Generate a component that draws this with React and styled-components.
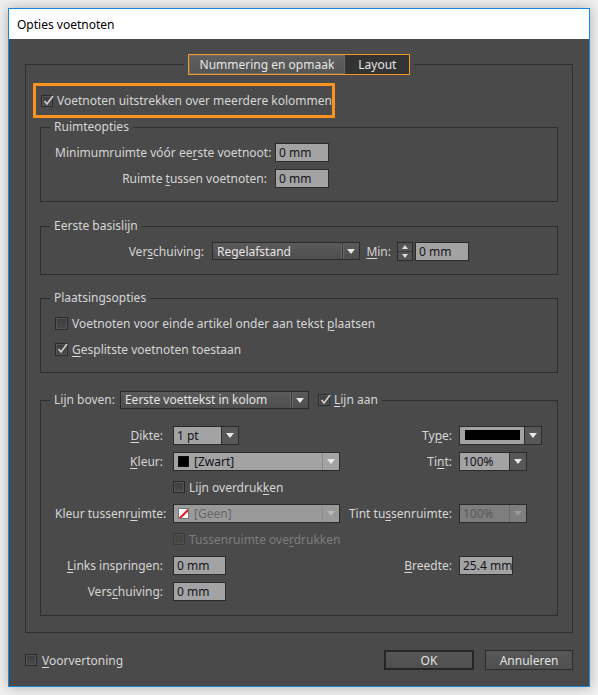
import React from "react";
import styled, { createGlobalStyle, css } from "styled-components";

const GlobalStyle = createGlobalStyle`
  html, body {
    margin: 0;
    padding: 0;
    background: #f0f0f0;
  }
  body {
    font-family: "Noto Sans", "Open Sans", sans-serif;
    font-size: 12px;
  }
  * { box-sizing: border-box; }
`;

const Page = styled.div`
  height: 695px;
  padding: 8px 0 0 8px;
`;

const Window = styled.div`
  width: 582px;
  height: 679px;
  border: 1px solid #1a86d9;
  box-shadow: 0 0 12px rgba(0, 0, 0, 0.28);
  display: flex;
  flex-direction: column;
`;

const TitleBar = styled.div`
  height: 30px;
  background: #ffffff;
  color: #000;
  display: flex;
  align-items: center;
  padding-left: 8px;
  font-size: 12px;
`;

const Body = styled.div`
  flex: 1;
  background: #4a4a4a;
  color: #d6d6d6;
  padding: 15px 16px 16px;
  display: flex;
  flex-direction: column;
`;

const Frame = styled.fieldset`
  margin: 0;
  min-width: 0;
  border: 1px solid #2e2e2e;
  padding: 0 14px 16px;
`;

const TabLegend = styled.legend`
  margin: 0 auto;
  padding: 0 4px;
`;

const TabBar = styled.div`
  display: flex;
  border: 1px solid #f39a1e;
  height: 21px;
`;

const Tab = styled.div`
  height: 19px;
  line-height: 18px;
  padding: 0 ${p => (p.$wide ? 10 : 12)}px;
  color: #e6e6e6;
  font-size: 12px;
  ${p =>
    p.$light
      ? css`
          background: linear-gradient(#5f5f5f, #555);
          border: 1px solid #6a6a6a;
        `
      : css`
          background: #333;
          border: 1px solid #333;
        `}
`;

const Highlight = styled.div`
  width: 302px;
  height: 35px;
  margin: 8px 0 0 -7px;
  border: 3px solid #f7931e;
  display: flex;
  align-items: center;
  padding-left: 5px;
`;

const Group = styled.fieldset`
  margin: ${p => p.$top}px 0 0;
  min-width: 0;
  border: 1px solid #2e2e2e;
  padding: ${p => p.$pt || 4}px 15px ${p => p.$pb || 10}px 14px;
`;

const Legend = styled.legend`
  margin-left: -5px;
  padding: 0 4px;
  line-height: 16px;
  color: #d6d6d6;
  display: flex;
  align-items: center;
`;

const LegendGap = styled.span`
  display: inline-block;
  width: ${p => p.$w}px;
`;

const Row = styled.div`
  height: 26px;
  display: flex;
  align-items: center;
`;

const FormGrid = styled.div`
  display: grid;
  grid-template-columns: ${p => p.$cols};
  grid-auto-rows: 26px;
  align-items: center;
`;

const Label = styled.label`
  text-align: right;
  white-space: nowrap;
  padding-right: ${p => p.$pr ?? 8}px;
  color: ${p => (p.$disabled ? "#8b8b8b" : "#d6d6d6")};
  ${p => p.$w && css`width: ${p.$w}px;`}
`;

const U = styled.u`
  text-decoration-thickness: 1px;
  text-underline-offset: 2px;
`;

const Input = styled.div`
  width: ${p => p.$w}px;
  height: 19px;
  background: #a3a3a3;
  border: 1px solid #2b2b2b;
  color: #141420;
  padding-left: 3px;
  line-height: 17px;
  white-space: nowrap;
`;

const SelectBox = styled.div`
  width: ${p => p.$w}px;
  height: ${p => p.$h || 19}px;
  display: flex;
  border: 1px solid #2b2b2b;
  ${p =>
    p.$variant === "dark" &&
    css`
      background: linear-gradient(#5a5a5a, #4e4e4e);
      color: #e4e4e4;
    `}
  ${p =>
    (p.$variant === "light" || p.$variant === "full") &&
    css`
      background: #a3a3a3;
      color: #141420;
    `}
  ${p =>
    p.$variant === "disabled" &&
    css`
      background: #9a9a9a;
      color: #666;
    `}
  ${p =>
    p.$variant === "dim" &&
    css`
      background: #7e7e7e;
      color: #5a5a5a;
    `}
`;

const SelectValue = styled.div`
  flex: 1;
  min-width: 0;
  display: flex;
  align-items: center;
  gap: 5px;
  padding-left: ${p => p.$pl ?? 3}px;
  white-space: nowrap;
  overflow: hidden;
`;

const Arrow = styled.div`
  width: 17px;
  display: flex;
  align-items: center;
  justify-content: center;
  ${p =>
    p.$variant === "dark" &&
    css`
      border-left: 1px solid #3a3a3a;
      box-shadow: inset 1px 0 0 #666, -2px 0 0 -1px #666;
    `}
  ${p =>
    p.$variant === "light" &&
    css`
      background: #575757;
      border-left: 1px solid #2b2b2b;
    `}
  ${p =>
    p.$variant === "full" &&
    css`
      border-left: 1px solid #8a8a8a;
    `}
  ${p =>
    p.$variant === "disabled" &&
    css`
      border-left: 1px solid #8c8c8c;
    `}
  ${p =>
    p.$variant === "dim" &&
    css`
      border-left: 1px solid #6c6c6c;
    `}

  &::after {
    content: "";
    border-left: 4px solid transparent;
    border-right: 4px solid transparent;
    border-top: 5px solid
      ${p =>
        p.$variant === "disabled"
          ? "#b8b8b8"
          : p.$variant === "dim"
          ? "#9a9a9a"
          : "#e8e8e8"};
  }
`;

const Swatch = styled.span`
  width: 11px;
  height: 11px;
  flex: none;
  background: ${p => (p.$none ? "#fff" : "#000")};
  border: 1px solid ${p => (p.$none ? "#777" : "#111")};
  position: relative;
  overflow: hidden;
`;

const LineSample = styled.span`
  flex: 1;
  height: 10px;
  margin-right: 4px;
  background: #000;
`;

const Spinner = styled.div`
  width: 16px;
  height: 19px;
  border: 1px solid #2b2b2b;
  background: #545454;
  display: flex;
  flex-direction: column;
  margin-right: 2px;
`;

const SpinHalf = styled.div`
  flex: 1;
  display: flex;
  align-items: center;
  justify-content: center;
  & + & {
    border-top: 1px solid #3a3a3a;
  }
  &::after {
    content: "";
    border-left: 3.5px solid transparent;
    border-right: 3.5px solid transparent;
    ${p =>
      p.$up
        ? css`border-bottom: 4px solid #dcdcdc;`
        : css`border-top: 4px solid #dcdcdc;`}
  }
`;

const CheckWrap = styled.label`
  display: inline-flex;
  align-items: center;
  gap: ${p => p.$gap ?? 4}px;
  white-space: nowrap;
  color: ${p => (p.$disabled ? "#7c7c7c" : "#d6d6d6")};
`;

const Box = styled.span`
  position: relative;
  width: ${p => p.$size || 12}px;
  height: ${p => p.$size || 12}px;
  flex: none;
  border: 1px solid #2a2a2a;
  background: linear-gradient(#3d3d3d, #4a4a4a);
  box-shadow: inset 0 0 0 1px #555;
  opacity: ${p => (p.$disabled ? 0.45 : 1)};

  svg {
    position: absolute;
    left: 0;
    top: -2px;
  }
`;

const Footer = styled.div`
  margin-top: 17px;
  height: 20px;
  display: flex;
  align-items: center;
  padding-left: 0;
`;

const Spacer = styled.div`
  flex: 1;
`;

const Button = styled.button`
  font: inherit;
  width: ${p => p.$w}px;
  height: 20px;
  padding: 0;
  color: #e2e2e2;
  background: linear-gradient(#575757, #4f4f4f);
  border: ${p => (p.$default ? "2px solid #262626" : "1px solid #2c2c2c")};
  & + & {
    margin-left: 11px;
  }
`;

const Check = ({ checked, disabled, size, gap, children }) => (
  <CheckWrap $disabled={disabled} $gap={gap}>
    <Box $disabled={disabled} $size={size}>
      {checked && (
        <svg width="13" height="13" viewBox="0 0 13 13">
          <path
            d="M2.5 7 L5 10 L11 2"
            fill="none"
            stroke="#d2d2d2"
            strokeWidth="1.6"
          />
        </svg>
      )}
    </Box>
    {children && <span>{children}</span>}
  </CheckWrap>
);

const Select = ({ w, h, variant, children, pl }) => (
  <SelectBox $w={w} $h={h} $variant={variant}>
    <SelectValue $pl={pl}>{children}</SelectValue>
    <Arrow $variant={variant} />
  </SelectBox>
);

const NoneSwatch = () => (
  <Swatch $none>
    <svg width="11" height="11" viewBox="0 0 11 11" style={{ display: "block" }}>
      <line x1="-1" y1="11" x2="10" y2="0" stroke="#e8141e" strokeWidth="2" />
    </svg>
  </Swatch>
);

const App = () => (
  <Page>
    <GlobalStyle />
    <Window>
      <TitleBar>Opties voetnoten</TitleBar>
      <Body>
        <Frame>
          <TabLegend>
            <TabBar>
              <Tab $light $wide>Nummering en opmaak</Tab>
              <Tab>Layout</Tab>
            </TabBar>
          </TabLegend>

          <Highlight>
            <Check checked>Voetnoten uitstrekken over meerdere kolommen</Check>
          </Highlight>

          <Group $top={1}>
            <Legend>Ruimteopties</Legend>
            <FormGrid $cols="220px 54px">
              <Label>
                Minimumruimte vóór ee<U>r</U>ste voetnoot:
              </Label>
              <Input $w={54}>0 mm</Input>
              <Label>
                Ruimte <U>t</U>ussen voetnoten:
              </Label>
              <Input $w={54}>0 mm</Input>
            </FormGrid>
          </Group>

          <Group $top={16}>
            <Legend>Eerste basislijn</Legend>
            <Row>
              <Label $w={157}>
                Ver<U>s</U>chuiving:
              </Label>
              <Select w={148} h={18} variant="dark" pl={4}>
                Regelafstand
              </Select>
              <Label $w={37} $pr={6}>
                <U>M</U>in:
              </Label>
              <Spinner>
                <SpinHalf $up />
                <SpinHalf />
              </Spinner>
              <Input $w={54}>0 mm</Input>
            </Row>
          </Group>

          <Group $top={15}>
            <Legend>Plaatsingsopties</Legend>
            <Row>
              <Check size={13}>
                Voetnoten voor einde artikel onder aan tekst <U>p</U>laatsen
              </Check>
            </Row>
            <Row>
              <Check checked size={13}>
                <U>G</U>esplitste voetnoten toestaan
              </Check>
            </Row>
          </Group>

          <Group $top={18} $pt={13} $pb={11}>
            <Legend>
              <span>
                Li<U>j</U>n boven:
              </span>
              <LegendGap $w={5} />
              <Select w={189} h={18} variant="dark" pl={4}>
                Eerste voettekst in kolom
              </Select>
              <LegendGap $w={9} />
              <Check checked>
                <U>L</U>ijn aan
              </Check>
            </Legend>
            <FormGrid $cols="118px 167px 1fr 83px">
              <Label $pr={10}>
                <U>D</U>ikte:
              </Label>
              <Select w={66} variant="light">
                1 pt
              </Select>
              <Label $pr={7}>
                Ty<U>p</U>e:
              </Label>
              <Select w={83} variant="light" pl={5}>
                <LineSample />
              </Select>

              <Label $pr={10}>
                <U>K</U>leur:
              </Label>
              <Select w={167} variant="full" pl={4}>
                <Swatch />
                [Zwart]
              </Select>
              <Label $pr={7}>
                Ti<U>n</U>t:
              </Label>
              <Select w={68} variant="light">
                100%
              </Select>

              <span />
              <Check>
                Lijn overdruk<U>k</U>en
              </Check>
              <span />
              <span />

              <Label $pr={10}>
                Kleur tussenr<U>u</U>imte:
              </Label>
              <Select w={167} variant="disabled" pl={4}>
                <NoneSwatch />
                [Geen]
              </Select>
              <Label $pr={7}>
                Tint tu<U>s</U>senruimte:
              </Label>
              <Select w={68} variant="dim">
                100%
              </Select>

              <span />
              <Check disabled>
                Tussenruimte ove<U>r</U>drukken
              </Check>
              <span />
              <span />

              <Label $pr={10}>
                <U>L</U>inks inspringen:
              </Label>
              <Input $w={53}>0 mm</Input>
              <Label $pr={7}>
                <U>B</U>reedte:
              </Label>
              <Input $w={54}>25.4 mm</Input>

              <Label $pr={10}>
                Vers<U>c</U>huiving:
              </Label>
              <Input $w={53}>0 mm</Input>
              <span />
              <span />
            </FormGrid>
          </Group>
        </Frame>

        <Footer>
          <Check gap={5}>
            <U>V</U>oorvertoning
          </Check>
          <Spacer />
          <Button $w={90} $default>
            OK
          </Button>
          <Button $w={88}>Annuleren</Button>
        </Footer>
      </Body>
    </Window>
  </Page>
);

export default App;
